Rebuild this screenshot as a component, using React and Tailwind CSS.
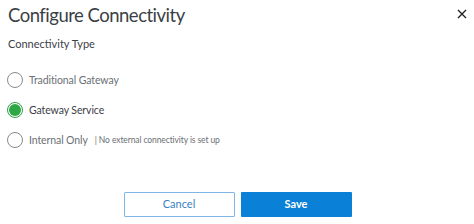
import React, { useState } from 'react';

const options = [
  { id: 'traditional', label: 'Traditional Gateway' },
  { id: 'service', label: 'Gateway Service' },
  { id: 'internal', label: 'Internal Only', note: 'No external connectivity is set up' },
];

function Radio({ checked }) {
  return checked ? (
    <span className="w-4 h-4 rounded-full border border-[#2f9e44] bg-white flex items-center justify-center shrink-0">
      <span className="w-[12px] h-[12px] rounded-full bg-[#2da844]" />
    </span>
  ) : (
    <span className="w-4 h-4 rounded-full border border-[#8a8a8a] bg-white shrink-0" />
  );
}

export default function App() {
  const [selected, setSelected] = useState('service');

  return (
    <div className="w-[474px] h-[224px] bg-white relative font-['Lato',sans-serif] text-[#3d4148]">
      <div className="flex justify-between items-start pl-2 pt-[2px]">
        <h1 className="text-[18.5px] leading-[26px] tracking-[-0.5px] text-[#3b3f46]">Configure Connectivity</h1>
        <button className="w-6 h-6 flex items-center justify-center text-[#222]">
          <svg width="10" height="10" viewBox="0 0 10 10">
            <path d="M1 1L9 9M9 1L1 9" stroke="currentColor" strokeWidth="1.4" />
          </svg>
        </button>
      </div>

      <div className="pl-2 mt-[8px] text-[11px] leading-[16px] text-[#3d4148]">Connectivity Type</div>

      <div className="pl-[7px] mt-[20px] flex flex-col gap-[14px]">
        {options.map((o) => (
          <label
            key={o.id}
            className="flex items-center gap-[6px] h-4 cursor-pointer"
            onClick={() => setSelected(o.id)}
          >
            <Radio checked={selected === o.id} />
            <span className={`text-[10.5px] tracking-[-0.1px] leading-4 ${selected === o.id ? 'text-[#3d4148]' : 'text-[#6b6f75]'}`}>
              {o.label}
            </span>
            {o.note && (
              <span className="text-[8.5px] tracking-[-0.1px] leading-4 text-[#6b6f75] ml-[1px]">| {o.note}</span>
            )}
          </label>
        ))}
      </div>

      <div className="flex justify-center gap-[6px] mt-[44px] pl-[1px]">
        <button className="w-[111px] h-[25px] border border-[#7fb6e6] bg-white text-[11px] text-[#3a7fc1] rounded-[1px]">
          Cancel
        </button>
        <button className="w-[111px] h-[25px] bg-[#0a80d6] text-white text-[11px] font-bold rounded-[1px]">
          Save
        </button>
      </div>
    </div>
  );
}
